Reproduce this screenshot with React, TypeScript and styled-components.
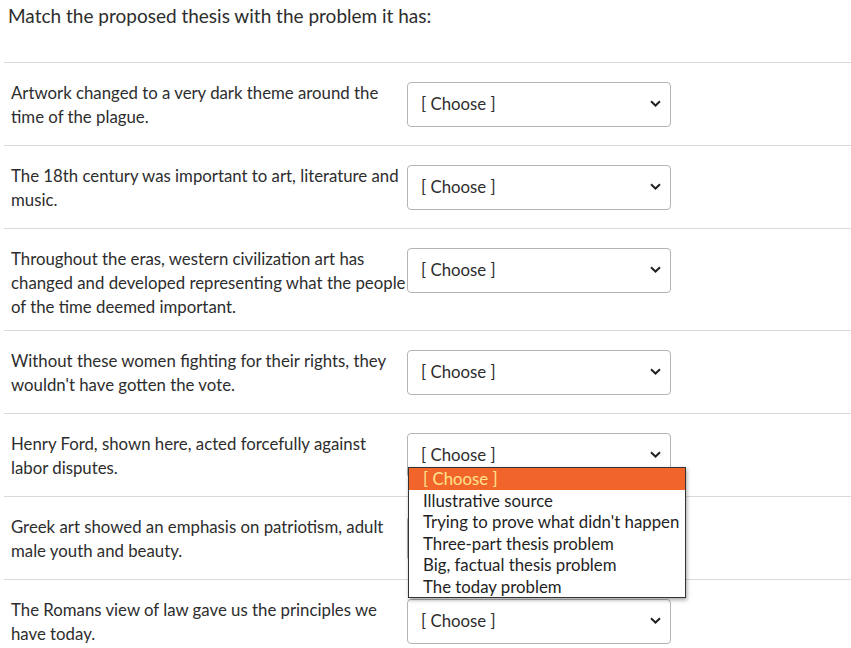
import React from 'react';
import styled, { createGlobalStyle } from 'styled-components';

const GlobalStyle = createGlobalStyle`
  body {
    margin: 0;
    background: #fff;
    font-family: Lato, "Noto Sans", sans-serif;
    color: #2d2d2d;
  }
`;

const Page = styled.div`
  padding-left: 4px;
  overflow: hidden;
  height: 648px;
`;

const Title = styled.h1`
  margin: 0;
  padding: 3px 4px 0;
  font-size: 19px;
  font-weight: 400;
  line-height: 26px;
  height: 59px;
  color: #2d2d2d;
`;

const Row = styled.div`
  display: flex;
  align-items: flex-start;
  box-sizing: border-box;
  min-height: 83px;
  padding: 18px 0 11px 7px;
  border-top: 1px solid #d9d9d9;
`;

const Prompt = styled.div`
  width: 396px;
  flex: none;
  font-size: 16.8px;
  line-height: 24px;
`;

const SelectWrap = styled.div`
  position: relative;
  margin-top: 1px;
`;

const Select = styled.div`
  box-sizing: border-box;
  width: 264px;
  height: 45px;
  display: flex;
  align-items: center;
  justify-content: space-between;
  padding: 0 9px 2px 13px;
  border: 1px solid #b4b4b4;
  border-radius: 4px;
  background: #fff;
  font-size: 16.8px;
  color: #2d2d2d;
`;

const Menu = styled.ul`
  position: absolute;
  top: 34px;
  left: 1px;
  width: 278px;
  box-sizing: border-box;
  margin: 0;
  padding: 0;
  list-style: none;
  background: #fff;
  border: 1px solid #333;
  box-shadow: 1px 2px 4px rgba(0, 0, 0, 0.35);
  z-index: 2;
`;

const Option = styled.li<{ $active?: boolean }>`
  height: 21.5px;
  line-height: 21.5px;
  padding-left: 14px;
  font-size: 16.8px;
  white-space: nowrap;
  color: ${(p) => (p.$active ? '#ffe38c' : '#1f1f1f')};
  background: ${(p) => (p.$active ? '#f1652a' : 'transparent')};
`;

const Chevron = () => (
  <svg width="11" height="7" viewBox="0 0 11 7">
    <path d="M1 1.2l4.5 4.3 4.5-4.3" fill="none" stroke="#222" strokeWidth="2" />
  </svg>
);

const options = [
  '[ Choose ]',
  'Illustrative source',
  "Trying to prove what didn't happen",
  'Three-part thesis problem',
  'Big, factual thesis problem',
  'The today problem',
];

const questions = [
  'Artwork changed to a very dark theme around the time of the plague.',
  'The 18th century was important to art, literature and music.',
  'Throughout the eras, western civilization art has changed and developed representing what the people of the time deemed important.',
  "Without these women fighting for their rights, they wouldn't have gotten the vote.",
  'Henry Ford, shown here, acted forcefully against labor disputes.',
  'Greek art showed an emphasis on patriotism, adult male youth and beauty.',
  'The Romans view of law gave us the principles we have today.',
];

export default function App() {
  return (
    <Page>
      <GlobalStyle />
      <Title>Match the proposed thesis with the problem it has:</Title>
      {questions.map((q, i) => (
        <Row key={i}>
          <Prompt>{q}</Prompt>
          <SelectWrap>
            <Select>
              <span>[ Choose ]</span>
              <Chevron />
            </Select>
            {i === 4 && (
              <Menu>
                {options.map((o, j) => (
                  <Option key={o} $active={j === 0}>
                    {o}
                  </Option>
                ))}
              </Menu>
            )}
          </SelectWrap>
        </Row>
      ))}
    </Page>
  );
}
